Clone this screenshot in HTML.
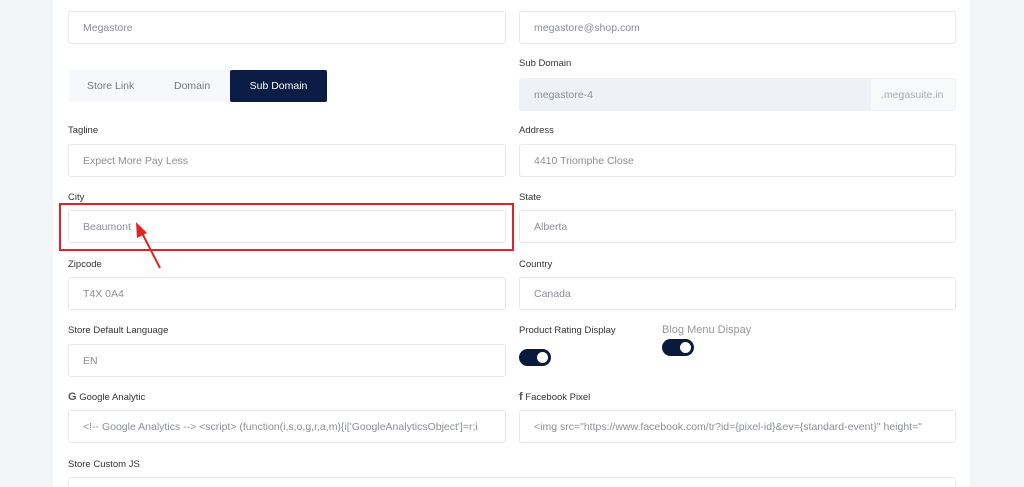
<!DOCTYPE html>
<html><head><meta charset="utf-8"><style>
*{box-sizing:border-box;margin:0;padding:0}
html,body{width:1024px;height:487px;overflow:hidden}
body{background:#f4f5f8;font-family:"Liberation Sans",sans-serif;position:relative}
.card{position:absolute;left:53px;top:0;width:917px;height:487px;background:#fff}
.in{position:absolute;height:33px;border:1px solid #e6e8ec;border-radius:3px;background:#fff;font-size:10.5px;color:#8a8f98;padding-left:14px;line-height:32px;white-space:nowrap;overflow:hidden}
.L{left:68px;width:438px}.R{left:519px;width:437px}
.lb{position:absolute;font-size:9.5px;color:#333}
.tog{position:absolute;width:32px;height:17px;border-radius:9px;background:#0a1a3c}
.tog:after{content:"";position:absolute;right:3px;top:3px;width:11px;height:11px;border-radius:50%;background:#fff}
</style></head><body>
<div class="card"></div>
<div class="in L" style="top:11px">Megastore</div>
<div class="in R" style="top:11px">megastore@shop.com</div>
<div style="position:absolute;left:69px;top:70px;width:258px;height:32px;background:#f6f8fb;border-radius:3px"></div>
<div style="position:absolute;left:87px;top:70px;line-height:32px;font-size:10.5px;color:#777">Store Link</div>
<div style="position:absolute;left:174px;top:70px;line-height:32px;font-size:10.5px;color:#777">Domain</div>
<div style="position:absolute;left:230px;top:70px;width:97px;height:32px;background:#0b1d45;border-radius:2px;color:#fff;font-size:10.5px;line-height:32px;text-align:center">Sub Domain</div>
<div class="lb" style="left:519px;top:58px">Sub Domain</div>
<div class="in R" style="top:78px;background:#eef1f6;border-color:#eef1f6;padding:0">
<span style="padding-left:14px">megastore-4</span>
<span style="position:absolute;right:0;top:0;width:84px;height:31px;background:#f8f9fb;color:#aaa;padding-left:10px">.megasuite.in</span></div>
<div class="lb" style="left:68px;top:125px">Tagline</div>
<div class="lb" style="left:519px;top:125px">Address</div>
<div class="in L" style="top:144px">Expect More Pay Less</div>
<div class="in R" style="top:144px">4410 Triomphe Close</div>
<div class="lb" style="left:68px;top:192px">City</div>
<div class="lb" style="left:519px;top:192px">State</div>
<div class="in L" style="top:210px">Beaumont</div>
<div class="in R" style="top:210px">Alberta</div>
<div style="position:absolute;left:59px;top:203px;width:455px;height:48px;border:2px solid #e02424"></div>
<svg style="position:absolute;left:0;top:0" width="1024" height="487"><line x1="160" y1="268" x2="142" y2="233" stroke="#e02424" stroke-width="2"/><polygon points="136,222 137,238 147,233" fill="#e02424"/></svg>
<div class="lb" style="left:68px;top:259px">Zipcode</div>
<div class="lb" style="left:519px;top:259px">Country</div>
<div class="in L" style="top:277px">T4X 0A4</div>
<div class="in R" style="top:277px">Canada</div>
<div class="lb" style="left:68px;top:325px">Store Default Language</div>
<div class="lb" style="left:519px;top:325px">Product Rating Display</div>
<div class="lb" style="left:662px;top:324px;font-size:11px;color:#999">Blog Menu Dispay</div>
<div class="in L" style="top:344px">EN</div>
<div class="tog" style="left:519px;top:349px"></div>
<div class="tog" style="left:662px;top:339px"></div>
<div class="lb" style="left:68px;top:391px"><b style="font-size:11px;color:#555">G</b> Google Analytic</div>
<div class="lb" style="left:519px;top:391px"><b style="font-size:11px;color:#555">f</b> Facebook Pixel</div>
<div class="in L" style="top:410px">&lt;!-- Google Analytics --&gt; &lt;script&gt; (function(i,s,o,g,r,a,m){i['GoogleAnalyticsObject']=r;i</div>
<div class="in R" style="top:410px">&lt;img src="https://www.facebook.com/tr?id={pixel-id}&amp;ev={standard-event}" height="</div>
<div class="lb" style="left:68px;top:459px">Store Custom JS</div>
<div class="in L" style="top:477px;width:888px"></div>
</body></html>
